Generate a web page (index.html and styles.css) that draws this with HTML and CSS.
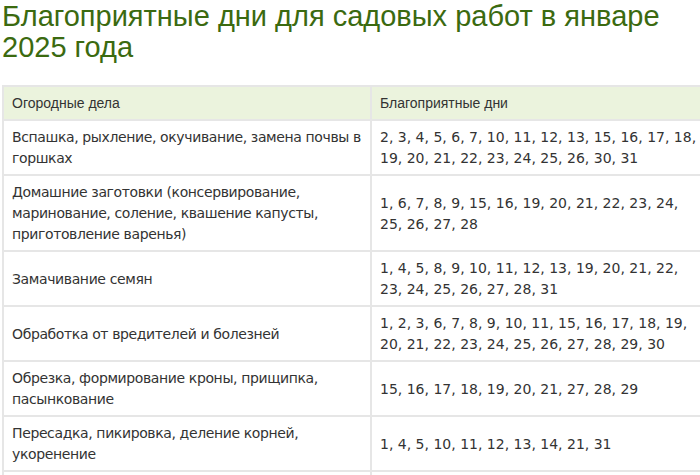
FILE: index.html
```html
<!DOCTYPE html>
<html lang="ru">
<head>
<meta charset="utf-8">
<title>Благоприятные дни для садовых работ в январе 2025 года</title>
<link rel="stylesheet" href="styles.css">
</head>
<body>
<main class="page">
  <h1 class="title">Благоприятные дни для садовых работ в январе 2025 года</h1>
  <table class="days">
    <thead>
      <tr>
        <th class="col-work">Огородные дела</th>
        <th class="col-days">Благоприятные дни</th>
      </tr>
    </thead>
    <tbody>
      <tr>
        <td class="work">Вспашка, рыхление, окучивание, замена почвы в горшках</td>
        <td>2, 3, 4, 5, 6, 7, 10, 11, 12, 13, 15, 16, 17, 18, 19, 20, 21, 22, 23, 24, 25, 26, 30, 31</td>
      </tr>
      <tr>
        <td class="work">Домашние заготовки (консервирование, маринование, соление, квашение капусты, приготовление варенья)</td>
        <td>1, 6, 7, 8, 9, 15, 16, 19, 20, 21, 22, 23, 24, 25, 26, 27, 28</td>
      </tr>
      <tr>
        <td class="work">Замачивание семян</td>
        <td>1, 4, 5, 8, 9, 10, 11, 12, 13, 19, 20, 21, 22, 23, 24, 25, 26, 27, 28, 31</td>
      </tr>
      <tr>
        <td class="work">Обработка от вредителей и болезней</td>
        <td>1, 2, 3, 6, 7, 8, 9, 10, 11, 15, 16, 17, 18, 19, 20, 21, 22, 23, 24, 25, 26, 27, 28, 29, 30</td>
      </tr>
      <tr>
        <td class="work">Обрезка, формирование кроны, прищипка, пасынкование</td>
        <td>15, 16, 17, 18, 19, 20, 21, 27, 28, 29</td>
      </tr>
      <tr>
        <td class="work">Пересадка, пикировка, деление корней, укоренение</td>
        <td>1, 4, 5, 10, 11, 12, 13, 14, 21, 31</td>
      </tr>
      <tr class="row-more">
        <td class="work"></td>
        <td></td>
      </tr>
    </tbody>
  </table>
</main>
</body>
</html>
```
FILE: styles.css
```css
html, body {
  margin: 0;
  padding: 0;
  background: #ffffff;
}

.page {
  padding: 0 0 0 2px;
}

.title {
  margin: 1px 0 22px 0;
  font-family: "Liberation Sans", Arial, sans-serif;
  font-weight: normal;
  font-size: 29px;
  line-height: 31px;
  color: #3b6a10;
  max-width: 670px;
}

.days {
  border-collapse: collapse;
  width: 706px;
  table-layout: fixed;
  font-family: "DejaVu Sans", Verdana, sans-serif;
  font-size: 14px;
  line-height: 21px;
  color: #333333;
}

.days th,
.days td {
  border: 2px solid #e6e6e6;
  padding: 6px 8px 5px 8px;
  text-align: left;
  vertical-align: middle;
}

.days th {
  background: #ebf3dd;
  font-family: "Liberation Sans", Arial, sans-serif;
  font-weight: normal;
  font-size: 14px;
  color: #333333;
}

.days td.work {
  letter-spacing: -0.38px;
}

.days .row-more td {
  height: 42px;
}

.col-work {
  width: 350px;
}
```
